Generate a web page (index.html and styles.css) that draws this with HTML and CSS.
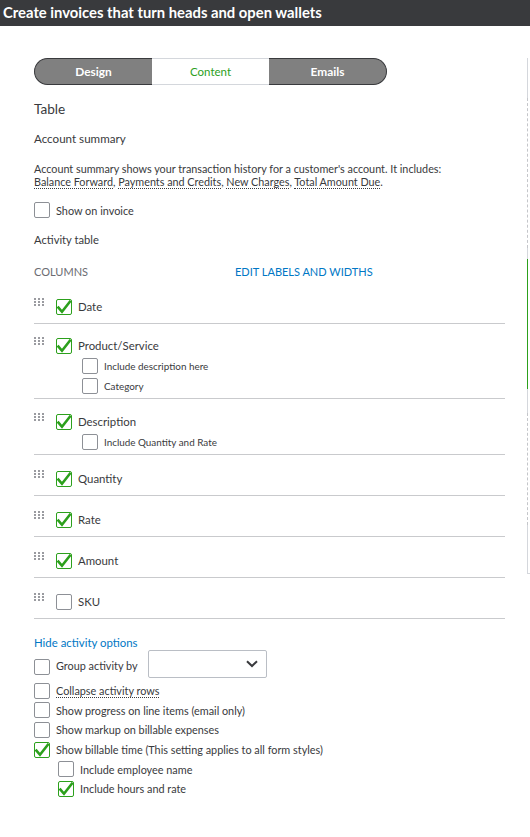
FILE: index.html
```html
<!DOCTYPE html>
<html>
<head>
<meta charset="utf-8">
<link rel="stylesheet" href="styles.css">
</head>
<body>
<div class="header">Create invoices that turn heads and open wallets</div>
<div class="layout">
  <div class="main">
    <div class="tabs">
      <div class="tab tab-left">Design</div>
      <div class="tab tab-active">Content</div>
      <div class="tab tab-right">Emails</div>
    </div>
    <div class="section-title">Table</div>
    <div class="subtitle">Account summary</div>
    <p class="desc">Account summary shows your transaction history for a customer's account. It includes:<br><span class="dotted">Balance Forward</span>, <span class="dotted">Payments and Credits</span>, <span class="dotted">New Charges</span>, <span class="dotted">Total Amount Due</span>.</p>
    <div class="opt opt-show"><span class="cb"></span><span>Show on invoice</span></div>
    <div class="subtitle activity">Activity table</div>
    <div class="cols-head"><span class="cols">COLUMNS</span><span class="link">EDIT LABELS AND WIDTHS</span></div>

    <div class="row row-first">
      <div class="row-main"><span class="grip"></span><span class="cb on"><svg class="tick" viewBox="0 0 16 16"><path d="M1.6 7.6 L6 12.8 L14.6 1.8"/></svg></span><span class="row-label">Date</span></div>
    </div>
    <div class="row row-sub2">
      <div class="row-main"><span class="grip"></span><span class="cb on"><svg class="tick" viewBox="0 0 16 16"><path d="M1.6 7.6 L6 12.8 L14.6 1.8"/></svg></span><span class="row-label">Product/Service</span></div>
      <div class="subopt"><span class="cb"></span><span>Include description here</span></div>
      <div class="subopt"><span class="cb"></span><span>Category</span></div>
    </div>
    <div class="row row-sub1">
      <div class="row-main"><span class="grip"></span><span class="cb on"><svg class="tick" viewBox="0 0 16 16"><path d="M1.6 7.6 L6 12.8 L14.6 1.8"/></svg></span><span class="row-label">Description</span></div>
      <div class="subopt"><span class="cb"></span><span>Include Quantity and Rate</span></div>
    </div>
    <div class="row">
      <div class="row-main"><span class="grip"></span><span class="cb on"><svg class="tick" viewBox="0 0 16 16"><path d="M1.6 7.6 L6 12.8 L14.6 1.8"/></svg></span><span class="row-label">Quantity</span></div>
    </div>
    <div class="row">
      <div class="row-main"><span class="grip"></span><span class="cb on"><svg class="tick" viewBox="0 0 16 16"><path d="M1.6 7.6 L6 12.8 L14.6 1.8"/></svg></span><span class="row-label">Rate</span></div>
    </div>
    <div class="row">
      <div class="row-main"><span class="grip"></span><span class="cb on"><svg class="tick" viewBox="0 0 16 16"><path d="M1.6 7.6 L6 12.8 L14.6 1.8"/></svg></span><span class="row-label">Amount</span></div>
    </div>
    <div class="row">
      <div class="row-main"><span class="grip"></span><span class="cb"></span><span class="row-label">SKU</span></div>
    </div>

    <div class="link hide-link">Hide activity options</div>
    <div class="opt opt-group"><span class="cb"></span><span class="group-label">Group activity by</span>
      <span class="select"><svg width="12" height="8" viewBox="0 0 12 8"><path d="M1 1.2 L6 6 L11 1.2" fill="none" stroke="#393a3d" stroke-width="2"/></svg></span>
    </div>
    <div class="opt opt-first"><span class="cb"></span><span class="dotted">Collapse activity rows</span></div>
    <div class="opt"><span class="cb"></span><span>Show progress on line items (email only)</span></div>
    <div class="opt"><span class="cb"></span><span>Show markup on billable expenses</span></div>
    <div class="opt"><span class="cb on"><svg class="tick" viewBox="0 0 16 16"><path d="M1.6 7.6 L6 12.8 L14.6 1.8"/></svg></span><span>Show billable time (This setting applies to all form styles)</span></div>
    <div class="opt opt-sub"><span class="cb"></span><span>Include employee name</span></div>
    <div class="opt opt-sub"><span class="cb on"><svg class="tick" viewBox="0 0 16 16"><path d="M1.6 7.6 L6 12.8 L14.6 1.8"/></svg></span><span>Include hours and rate</span></div>
  </div>
  <div class="preview">
    <div class="pv-a"></div>
    <div class="pv-b"></div>
    <div class="pv-c"></div>
    <div class="pv-green"></div>
    <div class="pv-d"></div>
    <div class="pv-e"></div>
    <div class="pv-f"></div>
  </div>
</div>
</body>
</html>
```
FILE: styles.css
```css
* { box-sizing: border-box; }
body {
  margin: 0;
  font-family: Lato, "Open Sans", sans-serif;
  color: #393a3d;
  background: #fff;
}
.header {
  background: #393a3d;
  color: #fff;
  font-weight: 700;
  font-size: 14.8px;
  height: 26px;
  line-height: 24px;
  padding-left: 3px;
}
.layout {
  display: flex;
  align-items: flex-start;
}
.main {
  width: 527px;
  flex: none;
  padding: 32px 22px 0 34px;
}
.tabs {
  display: flex;
  width: 353px;
  height: 27px;
}
.tab {
  flex: 1;
  display: flex;
  align-items: center;
  justify-content: center;
  font-size: 11.9px;
  font-weight: 700;
  color: #fff;
  background: #808080;
  border: 1px solid #393a3d;
}
.tab-left { border-radius: 14px 0 0 14px; border-right: none; }
.tab-right { border-radius: 0 14px 14px 0; border-left: none; }
.tab-active {
  background: #fff;
  color: #2ca01c;
  font-weight: 400;
  font-size: 11.5px;
  border: 1px solid #d4d7dc;
  border-left: none;
  border-right: none;
}
.section-title {
  font-size: 13.6px;
  margin-top: 15px;
  line-height: 18px;
}
.subtitle {
  font-size: 11.6px;
  line-height: 14px;
  margin-top: 14px;
}
.desc {
  font-size: 10.8px;
  line-height: 13px;
  margin: 16px 0 0;
}
.dotted {
  border-bottom: 1px dotted #393a3d;
}
.cb {
  width: 16px;
  height: 16px;
  border: 1px solid #8d9096;
  border-radius: 2px;
  flex: none;
  position: relative;
  background: #fff;
}
.cb.on { border-color: #2ca01c; }
.tick {
  position: absolute;
  left: -1px;
  top: -1px;
  width: 16px;
  height: 16px;
  overflow: visible;
}
.tick path {
  fill: none;
  stroke: #2ca01c;
  stroke-width: 2.6;
  stroke-linejoin: miter;
}
.opt {
  display: flex;
  align-items: center;
  gap: 6px;
  font-size: 10.85px;
  height: 19.6px;
}
.opt-show { margin-top: 12px; height: 20px; font-size: 10.9px; }
.activity { margin-top: 13px; font-size: 11.2px; }
.cols-head {
  display: flex;
  font-size: 11px;
  margin-top: 18px;
  line-height: 14px;
}
.cols { color: #6b6c72; width: 201px; flex: none; }
.link { color: #0077c5; }
.row {
  border-bottom: 1px solid #c9cacd;
  padding: 16px 0 4px;
}
.row-first { padding-top: 20px; }
.row-sub2 { padding: 14px 0 0; }
.row-sub1 { padding: 15px 0 0; }
.row-main {
  display: flex;
  align-items: flex-start;
  height: 20px;
}
.grip {
  width: 10px;
  height: 8px;
  margin-right: 12px;
  margin-top: -1px;
  flex: none;
  background:
    linear-gradient(90deg, #9a9ba0 0 2px, transparent 2px 4px, #9a9ba0 4px 6px, transparent 6px 8px, #9a9ba0 8px 10px);
  -webkit-mask: linear-gradient(#000 0 2px, transparent 2px 3px, #000 3px 5px, transparent 5px 6px, #000 6px 8px);
  mask: linear-gradient(#000 0 2px, transparent 2px 3px, #000 3px 5px, transparent 5px 6px, #000 6px 8px);
}
.row-label {
  font-size: 11.4px;
  line-height: 16px;
  margin-left: 6px;
}
.subopt {
  display: flex;
  align-items: flex-start;
  gap: 6px;
  font-size: 9.9px;
  line-height: 16px;
  margin-left: 48px;
  height: 20px;
}
.hide-link {
  font-size: 11.4px;
  margin-top: 17px;
  line-height: 14px;
}
.opt.opt-group {
  height: 28px;
  align-items: flex-start;
}
.opt-group .cb { margin-top: 9px; }
.group-label { margin-top: 8px; line-height: 16px; }
.select {
  width: 119px;
  height: 28px;
  border: 1px solid #babec5;
  border-radius: 2px;
  margin-left: 4px;
  display: flex;
  align-items: center;
  justify-content: flex-end;
  padding-right: 8px;
}
.opt-first { margin-top: 3px; }
.opt-sub { margin-left: 24px; }
.preview {
  flex: 1;
  margin-top: 32px;
  display: flex;
  flex-direction: column;
  border-bottom: 1px solid #d4d7dc;
}
.preview > div { border-left: 1px solid #d4d7dc; }
.preview > .pv-b, .preview > .pv-e { border-left: 1px dashed #c4c6ca; }
.preview > .pv-green { border-left: 1px solid #2ca01c; }
.pv-a { height: 40px; }
.pv-b { height: 150px; }
.pv-c { height: 11px; }
.pv-green { height: 130px; }
.pv-d { height: 24px; }
.pv-e { height: 112px; }
.pv-f { height: 48px; }
```
